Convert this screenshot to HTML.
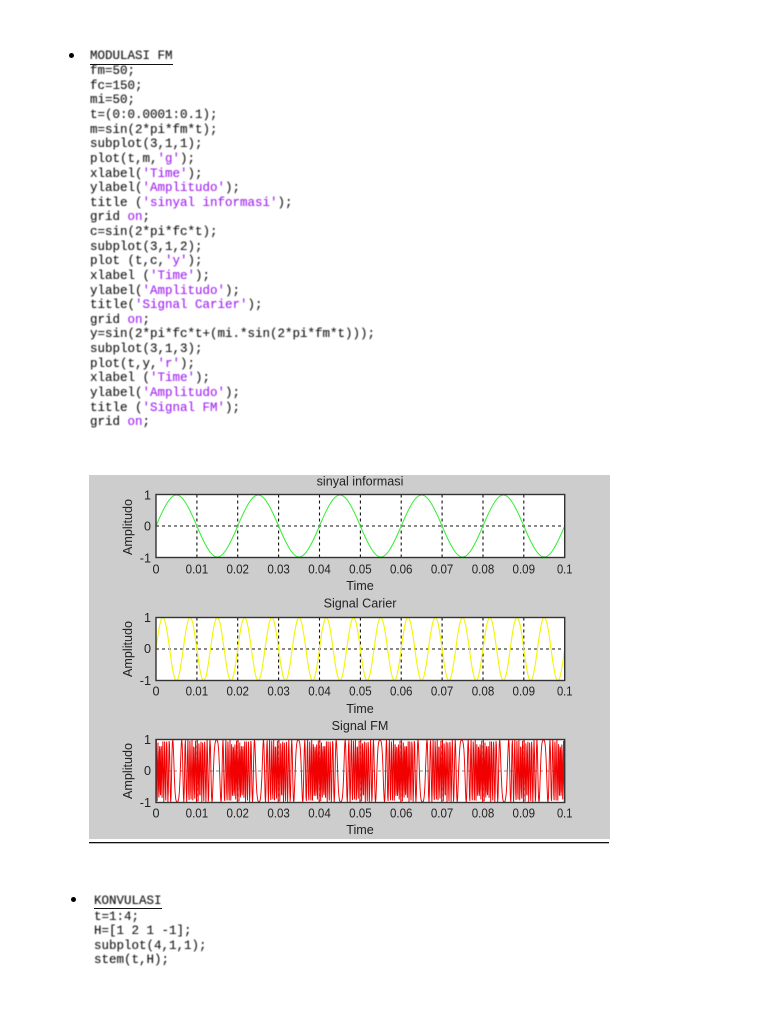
<!DOCTYPE html>
<html><head><meta charset="utf-8">
<style>
html,body{margin:0;padding:0;background:#fff;width:768px;height:1024px;overflow:hidden}
pre{position:absolute;margin:0;font-family:"Liberation Mono",monospace;font-size:12.5px;line-height:14.63px;color:#111;-webkit-text-stroke:.1px currentColor;filter:blur(.4px)}
i{font-style:normal;color:#a020f0}
.b{position:absolute;width:5px;height:5px;border-radius:50%;background:#000}
.u{position:absolute;height:1.3px;background:#111}
svg{position:absolute;left:0;top:0}
svg text{font-family:"Liberation Sans",sans-serif;font-size:12.6px;fill:#222;text-anchor:middle}
</style></head><body>
<div class="b" style="left:69px;top:53px"></div>
<pre style="left:90px;top:48.5px">MODULASI FM</pre>
<div class="u" style="left:90px;top:64px;width:83px"></div>
<pre style="left:90px;top:64.2px">fm=50;
fc=150;
mi=50;
t=(0:0.0001:0.1);
m=sin(2*pi*fm*t);
subplot(3,1,1);
plot(t,m,<i>'g'</i>);
xlabel(<i>'Time'</i>);
ylabel(<i>'Amplitudo'</i>);
title (<i>'sinyal informasi'</i>);
grid <i>on</i>;
c=sin(2*pi*fc*t);
subplot(3,1,2);
plot (t,c,<i>'y'</i>);
xlabel (<i>'Time'</i>);
ylabel(<i>'Amplitudo'</i>);
title(<i>'Signal Carier'</i>);
grid <i>on</i>;
y=sin(2*pi*fc*t+(mi.*sin(2*pi*fm*t)));
subplot(3,1,3);
plot(t,y,<i>'r'</i>);
xlabel (<i>'Time'</i>);
ylabel(<i>'Amplitudo'</i>);
title (<i>'Signal FM'</i>);
grid <i>on</i>;</pre>
<svg width="768" height="1024" viewBox="0 0 768 1024" style="filter:blur(.35px)">
<defs>
<g id="grid">
<rect x="0" y="0" width="408.7" height="63" fill="#fff"/>
</g>
<g id="lines" fill="none" stroke="#111" stroke-width="1.1" stroke-dasharray="3 3">
<path d="M40.9 0V63M81.7 0V63M122.6 0V63M163.5 0V63M204.4 0V63M245.2 0V63M286.1 0V63M327 0V63M367.8 0V63M0 31.5H408.7"/>
</g>
<g id="ticks">
<text x="0" y="0">0</text><text x="40.9" y="0" textLength="22.5" lengthAdjust="spacingAndGlyphs">0.01</text><text x="81.7" y="0" textLength="22.5" lengthAdjust="spacingAndGlyphs">0.02</text><text x="122.6" y="0" textLength="22.5" lengthAdjust="spacingAndGlyphs">0.03</text><text x="163.5" y="0" textLength="22.5" lengthAdjust="spacingAndGlyphs">0.04</text><text x="204.4" y="0" textLength="22.5" lengthAdjust="spacingAndGlyphs">0.05</text><text x="245.2" y="0" textLength="22.5" lengthAdjust="spacingAndGlyphs">0.06</text><text x="286.1" y="0" textLength="22.5" lengthAdjust="spacingAndGlyphs">0.07</text><text x="327" y="0" textLength="22.5" lengthAdjust="spacingAndGlyphs">0.08</text><text x="367.8" y="0" textLength="22.5" lengthAdjust="spacingAndGlyphs">0.09</text><text x="408.7" y="0" textLength="15.5" lengthAdjust="spacingAndGlyphs">0.1</text>
</g>
<g id="yt">
<text x="-5" y="4.5" style="text-anchor:end">1</text><text x="-5" y="35.5" style="text-anchor:end">0</text><text x="-5" y="67.5" style="text-anchor:end">-1</text>
</g>
</defs>
<rect x="89" y="475" width="521" height="364" fill="#cdcdcd"/>
<rect x="89" y="842" width="520" height="1.3" fill="#111"/>

<use href="#grid" x="156" y="494.5"/>
<use href="#grid" x="156" y="617.5"/>
<use href="#grid" x="156" y="739.5"/>
<use href="#lines" x="156" y="494.5"/>
<use href="#lines" x="156" y="617.5"/>
<use href="#lines" x="156" y="739.5" opacity=".5"/>

<path fill="none" stroke="#33ee33" stroke-width="1" d="M156 526c17.36 -41.3 23.54 -41.3 40.87 0c17.36 41.3 23.54 41.3 40.87 0c17.36 -41.3 23.54 -41.3 40.87 0c17.36 41.3 23.54 41.3 40.87 0c17.36 -41.3 23.54 -41.3 40.87 0c17.36 41.3 23.54 41.3 40.87 0c17.36 -41.3 23.54 -41.3 40.87 0c17.36 41.3 23.54 41.3 40.87 0c17.36 -41.3 23.54 -41.3 40.87 0c17.36 41.3 23.54 41.3 40.87 0"/>
<path id="yel" fill="none" stroke="#f4f400" stroke-width="1.1"/>
<path id="fm" fill="none" stroke="#f00000" stroke-width=".95" stroke-linejoin="bevel"/>

<g fill="none" stroke="#333" stroke-width="1.4">
<rect x="156" y="494.5" width="408.7" height="63"/>
<rect x="156" y="617.5" width="408.7" height="63"/>
<rect x="156" y="739.5" width="408.7" height="63"/>
</g>

<use href="#yt" x="156" y="495"/>
<use href="#yt" x="156" y="617.5"/>
<use href="#yt" x="156" y="739.5"/>
<use href="#ticks" x="156" y="573.5"/>
<use href="#ticks" x="156" y="695.5"/>
<use href="#ticks" x="156" y="817.5"/>

<text x="360" y="485.5">sinyal informasi</text>
<text x="360" y="590">Time</text>
<text x="360" y="607.5">Signal Carier</text>
<text x="360" y="713">Time</text>
<text x="360" y="730">Signal FM</text>
<text x="360" y="834">Time</text>
<text transform="translate(132 527) rotate(-90)" style="font-size:12.6px">Amplitudo</text>
<text transform="translate(132 649) rotate(-90)" style="font-size:12.6px">Amplitudo</text>
<text transform="translate(132 771) rotate(-90)" style="font-size:12.6px">Amplitudo</text>
</svg>
<div class="b" style="left:71px;top:897px"></div>
<pre style="left:94px;top:893.8px">KONVULASI</pre>
<div class="u" style="left:94px;top:908px;width:68px"></div>
<pre style="left:94px;top:909.6px">t=1:4;
H=[1 2 1 -1];
subplot(4,1,1);
stem(t,H);</pre>
<script>
(function(){
var d='',e='',t,x,n;
for(n=0;n<=1000;n++){
 t=n*0.0001;
 x=(156+t*4087).toFixed(1);
 d+=(n?'L':'M')+x+' '+(771-31.5*Math.sin(2*Math.PI*150*t+50*Math.sin(2*Math.PI*50*t))).toFixed(1);
 e+=(n?'L':'M')+x+' '+(649-31.5*Math.sin(2*Math.PI*150*t)).toFixed(1);
}
document.getElementById('fm').setAttribute('d',d);
document.getElementById('yel').setAttribute('d',e);
})();
</script>
</body></html>
